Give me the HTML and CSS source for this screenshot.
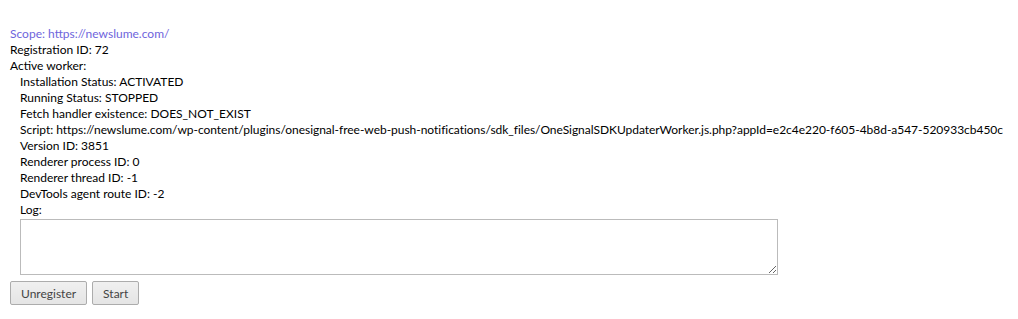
FILE: index.html
```html
<!DOCTYPE html>
<html lang="en">
<head>
    <meta charset="UTF-8">
    <title>Service Worker</title>
    <link rel="stylesheet" href="styles.css">
</head>
<body>
    <div class="registration">
        <div class="scope">Scope: https://newslume.com/</div>
        <div>Registration ID: 72</div>
        <div>Active worker:</div>
        <div class="worker">
            <div>Installation Status: ACTIVATED</div>
            <div>Running Status: STOPPED</div>
            <div>Fetch handler existence: DOES_NOT_EXIST</div>
            <div class="script">Script: https://newslume.com/wp-content/plugins/onesignal-free-web-push-notifications/sdk_files/OneSignalSDKUpdaterWorker.js.php?appId=e2c4e220-f605-4b8d-a547-520933cb450c</div>
            <div>Version ID: 3851</div>
            <div>Renderer process ID: 0</div>
            <div>Renderer thread ID: -1</div>
            <div>DevTools agent route ID: -2</div>
            <div>Log:</div>
            <textarea class="log" readonly></textarea>
        </div>
        <div class="actions">
            <button>Unregister</button>
            <button>Start</button>
        </div>
    </div>
</body>
</html>
```

FILE: styles.css
```css
body {
    margin: 0;
    padding: 26px 10px 0;
    font-family: 'Lato', sans-serif;
    font-size: 12px;
    line-height: 16px;
    color: #000;
    background: #fff;
}
.scope {
    color: #6e64dc;
}
.worker {
    padding-left: 10px;
}
.script {
    white-space: nowrap;
    letter-spacing: -0.03px;
}
.log {
    display: block;
    box-sizing: border-box;
    width: 758px;
    height: 56px;
    margin: 1px 0 0;
    border: 1px solid #bbb;
    resize: both;
}
.actions {
    display: flex;
    gap: 5px;
    margin-top: 6px;
}
button {
    font-family: inherit;
    font-size: 12px;
    color: #444;
    height: 24px;
    padding: 0 10px;
    border: 1px solid #acacac;
    border-radius: 2px;
    background: linear-gradient(#f0f0f0, #e5e5e5);
}
```
